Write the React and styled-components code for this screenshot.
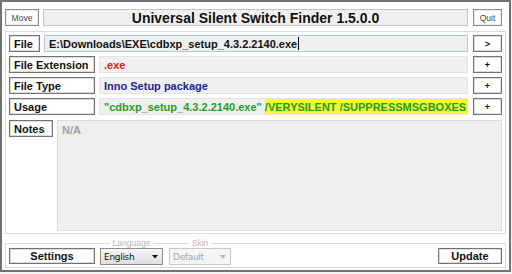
import React from "react";
import styled, { createGlobalStyle } from "styled-components";

const GlobalStyle = createGlobalStyle`
  html, body {
    margin: 0;
    padding: 0;
    background: #f3f3f3;
  }
  * { box-sizing: border-box; }
`;

/* JANELA */
const Window = styled.div`
  width: 511px;
  height: 272px;
  border: 2px solid #727272;
  background: #ffffff;
  display: flex;
  flex-direction: column;
  padding: 7px 3px 0 3px;
  font-family: "Liberation Sans", Arial, sans-serif;
  color: #111;
`;

/* BARRA DO TITULO */
const TitleRow = styled.div`
  display: flex;
  height: 17px;
  gap: 4px;
  padding-right: 4px;
`;

const SmallButton = styled.div`
  width: ${(p) => p.$w || 29}px;
  margin-left: ${(p) => p.$ml || 0}px;
  flex: none;
  border: 1px solid #8c8c8c;
  box-shadow: inset 0 0 0 1px #ececec;
  background: #fff;
  display: flex;
  align-items: center;
  justify-content: center;
  font-size: 8.5px;
  color: #444;
`;

const TitleBox = styled.div`
  flex: 1;
  background: #f0f0f0;
  border: 1px solid #c4c4c4;
  display: flex;
  align-items: center;
  justify-content: center;
  font-size: 14px;
  font-weight: bold;
  color: #111;
`;

/* GRUPO PRINCIPAL */
const Group = styled.div`
  margin-top: 5px;
  border: 1px solid #dcdcdc;
  padding: 3px 3px 2px 3px;
  display: flex;
  flex-direction: column;
  gap: 4px;
`;

const Row = styled.div`
  display: flex;
  height: 17px;
  gap: 4px;
`;

const Label = styled.div`
  width: ${(p) => p.$w}px;
  height: 17px;
  flex: none;
  border: 1px solid #747474;
  box-shadow: inset 0 0 0 1px #dcdcdc;
  background: #fff;
  display: flex;
  align-items: center;
  padding-left: 4px;
  font-size: 11px;
  font-weight: bold;
  color: #111;
`;

const Value = styled.div`
  flex: 1;
  min-width: 0;
  background: #f0f0f0;
  border: 1px solid ${(p) => (p.$focus ? "#b3c8e2" : "#e3e3e3")};
  display: flex;
  align-items: center;
  padding-left: 4px;
  font-size: 11px;
  font-weight: bold;
  color: ${(p) => p.$color || "#111"};
  white-space: nowrap;
  overflow: hidden;
`;

const Caret = styled.span`
  display: inline-block;
  width: 1px;
  height: 13px;
  background: #000;
  margin-left: 1px;
`;

const Highlight = styled.span`
  background: #f6f63a;
  height: 15px;
  display: inline-flex;
  align-items: center;
`;

const ActionButton = styled(SmallButton)`
  font-size: 9px;
  font-weight: bold;
  color: #111;
  border-color: #747474;
  box-shadow: inset 0 0 0 1px #dcdcdc;
`;

const NotesRow = styled.div`
  display: flex;
  gap: 4px;
  margin-top: 1px;
`;

const NotesBox = styled.div`
  flex: 1;
  height: 111px;
  background: #efefef;
  border: 1px solid #dddddd;
  padding: 3px 0 0 4px;
  font-size: 11px;
  font-weight: bold;
  color: #a2a2a2;
`;

/* BARRA DE BAIXO */
const BottomBar = styled.div`
  margin-top: 9px;
  height: 25px;
  border: 1px solid #dcdcdc;
  padding: 4px 3px 0 3px;
  display: flex;
  align-items: flex-start;
  gap: 5px;
`;

const BigButton = styled.div`
  width: ${(p) => p.$w}px;
  height: 16px;
  margin-left: ${(p) => (p.$push ? "auto" : "0")};
  flex: none;
  border: 1px solid #747474;
  box-shadow: inset 0 0 0 1px #dcdcdc;
  background: #fff;
  display: flex;
  align-items: center;
  justify-content: center;
  font-size: 11px;
  font-weight: bold;
  color: #111;
`;

const Field = styled.div`
  display: flex;
  flex-direction: column;
  align-items: center;
  margin-top: -9px;
  margin-left: ${(p) => p.$ml || 0}px;
`;

const Legend = styled.div`
  height: 9px;
  line-height: 9px;
  font-size: 8.5px;
  color: #b9b9b9;
  background: #fff;
  padding: 0 3px;
`;

const Select = styled.div`
  width: ${(p) => p.$w}px;
  height: 17px;
  border: 1px solid ${(p) => (p.$disabled ? "#c9c9c9" : "#8d8d8d")};
  background: ${(p) =>
    p.$disabled ? "#f5f5f5" : "linear-gradient(#f7f7f7, #dedede)"};
  display: flex;
  align-items: center;
  justify-content: space-between;
  padding: 0 4px 0 3px;
  font-family: "DejaVu Sans", sans-serif;
  font-size: 9px;
  letter-spacing: -0.3px;
  color: ${(p) => (p.$disabled ? "#a9a9a9" : "#111")};
`;

const Arrow = ({ color }) => (
  <svg width="6" height="4" viewBox="0 0 6 4">
    <path d="M0 0 L6 0 L3 3.5 Z" fill={color} />
  </svg>
);

export default function App() {
  return (
    <>
      <GlobalStyle />
      <Window>
        <TitleRow>
          <SmallButton $w={34}>Move</SmallButton>
          <TitleBox>Universal Silent Switch Finder 1.5.0.0</TitleBox>
          <SmallButton $w={29} $ml={1}>Quit</SmallButton>
        </TitleRow>

        <Group>
          <Row>
            <Label $w={31}>File</Label>
            <Value $focus>
              E:\Downloads\EXE\cdbxp_setup_4.3.2.2140.exe
              <Caret />
            </Value>
            <ActionButton $ml={1}>&gt;</ActionButton>
          </Row>
          <Row>
            <Label $w={86}>File Extension</Label>
            <Value $color="#e5141b">.exe</Value>
            <ActionButton $ml={1}>+</ActionButton>
          </Row>
          <Row>
            <Label $w={86}>File Type</Label>
            <Value $color="#1d239b">Inno Setup package</Value>
            <ActionButton $ml={1}>+</ActionButton>
          </Row>
          <Row>
            <Label $w={86}>Usage</Label>
            <Value $color="#1f9d1f">
              "cdbxp_setup_4.3.2.2140.exe"&nbsp;
              <Highlight>/VERYSILENT /SUPPRESSMSGBOXES /NORESTART</Highlight>
            </Value>
            <ActionButton $ml={1}>+</ActionButton>
          </Row>
          <NotesRow>
            <Label $w={44}>Notes</Label>
            <NotesBox>N/A</NotesBox>
          </NotesRow>
        </Group>

        <BottomBar>
          <BigButton $w={86}>Settings</BigButton>
          <Field>
            <Legend>Language</Legend>
            <Select $w={63}>
              English
              <Arrow color="#111" />
            </Select>
          </Field>
          <Field $ml={1}>
            <Legend>Skin</Legend>
            <Select $w={62} $disabled>
              Default
              <Arrow color="#b3b3b3" />
            </Select>
          </Field>
          <BigButton $w={64} $push>
            Update
          </BigButton>
        </BottomBar>
      </Window>
    </>
  );
}
